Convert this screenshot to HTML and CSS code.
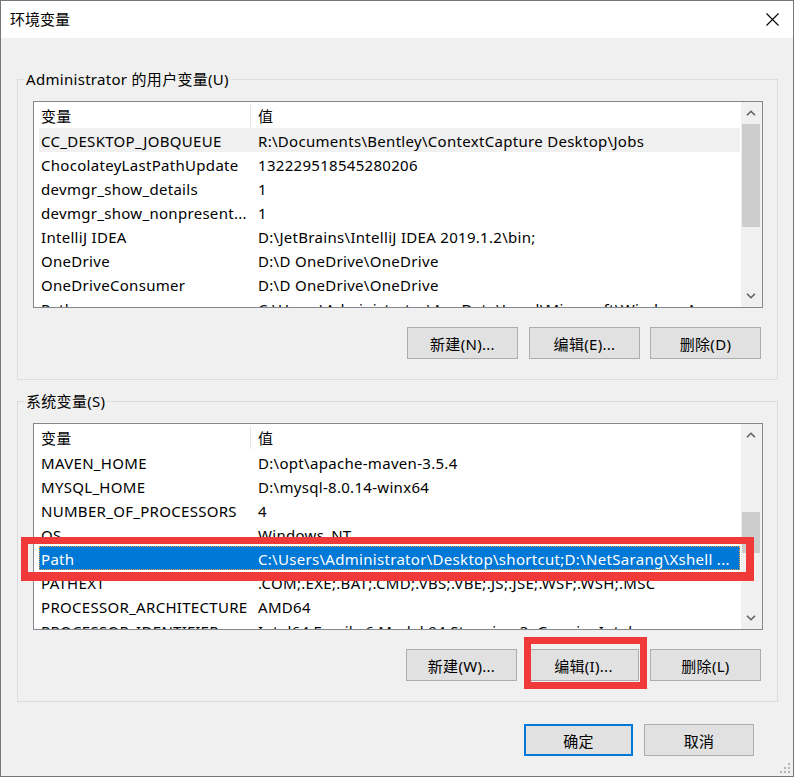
FILE: index.html
```html
<!DOCTYPE html>
<html lang="zh-CN">
<head>
    <meta charset="UTF-8">
    <title>环境变量</title>
    <link rel="stylesheet" href="styles.css">
</head>
<body>
    <div class="window">
        <div class="titlebar">
            <span class="title">环境变量</span>
            <span class="close">
                <svg width="13" height="13" viewBox="0 0 13 13"><path d="M0.5 0.5 L12.5 12.5 M12.5 0.5 L0.5 12.5" stroke="#000" stroke-width="1.1" fill="none"/></svg>
            </span>
        </div>

        <div class="client">
            <fieldset class="group">
                <legend>Administrator 的用户变量(U)</legend>
                <div class="listview">
                    <div class="list-body">
                        <div class="list-head">
                            <span class="cell name">变量</span>
                            <span class="cell value">值</span>
                        </div>
                        <div class="row hover"><span class="cell name">CC_DESKTOP_JOBQUEUE</span><span class="cell value">R:\Documents\Bentley\ContextCapture Desktop\Jobs</span></div>
                        <div class="row"><span class="cell name">ChocolateyLastPathUpdate</span><span class="cell value">132229518545280206</span></div>
                        <div class="row"><span class="cell name">devmgr_show_details</span><span class="cell value">1</span></div>
                        <div class="row"><span class="cell name">devmgr_show_nonpresent...</span><span class="cell value">1</span></div>
                        <div class="row"><span class="cell name">IntelliJ IDEA</span><span class="cell value">D:\JetBrains\IntelliJ IDEA 2019.1.2\bin;</span></div>
                        <div class="row"><span class="cell name">OneDrive</span><span class="cell value">D:\D OneDrive\OneDrive</span></div>
                        <div class="row"><span class="cell name">OneDriveConsumer</span><span class="cell value">D:\D OneDrive\OneDrive</span></div>
                        <div class="row"><span class="cell name">Path</span><span class="cell value">C:\Users\Administrator\AppData\Local\Microsoft\WindowsApps;</span></div>
                    </div>
                    <div class="scrollbar">
                        <div class="sb-btn">
                            <svg width="10" height="6" viewBox="0 0 10 6"><path d="M1 5.3 L5 1.3 L9 5.3" stroke="#606060" stroke-width="1.6" fill="none"/></svg>
                        </div>
                        <div class="sb-track">
                            <div class="sb-thumb user-thumb"></div>
                        </div>
                        <div class="sb-btn">
                            <svg width="10" height="6" viewBox="0 0 10 6"><path d="M1 0.7 L5 4.7 L9 0.7" stroke="#606060" stroke-width="1.6" fill="none"/></svg>
                        </div>
                    </div>
                </div>
                <div class="btn-row">
                    <button class="btn">新建(N)...</button>
                    <button class="btn">编辑(E)...</button>
                    <button class="btn">删除(D)</button>
                </div>
            </fieldset>

            <fieldset class="group system">
                <legend>系统变量(S)</legend>
                <div class="listview">
                    <div class="list-body">
                        <div class="list-head">
                            <span class="cell name">变量</span>
                            <span class="cell value">值</span>
                        </div>
                        <div class="row"><span class="cell name">MAVEN_HOME</span><span class="cell value">D:\opt\apache-maven-3.5.4</span></div>
                        <div class="row"><span class="cell name">MYSQL_HOME</span><span class="cell value">D:\mysql-8.0.14-winx64</span></div>
                        <div class="row"><span class="cell name">NUMBER_OF_PROCESSORS</span><span class="cell value">4</span></div>
                        <div class="row"><span class="cell name">OS</span><span class="cell value">Windows_NT</span></div>
                        <div class="row selected"><span class="cell name">Path</span><span class="cell value">C:\Users\Administrator\Desktop\shortcut;D:\NetSarang\Xshell ...</span></div>
                        <div class="row"><span class="cell name">PATHEXT</span><span class="cell value">.COM;.EXE;.BAT;.CMD;.VBS;.VBE;.JS;.JSE;.WSF;.WSH;.MSC</span></div>
                        <div class="row"><span class="cell name">PROCESSOR_ARCHITECTURE</span><span class="cell value">AMD64</span></div>
                        <div class="row"><span class="cell name">PROCESSOR_IDENTIFIER</span><span class="cell value">Intel64 Family 6 Model 94 Stepping 3, GenuineIntel</span></div>
                    </div>
                    <div class="scrollbar">
                        <div class="sb-btn">
                            <svg width="10" height="6" viewBox="0 0 10 6"><path d="M1 5.3 L5 1.3 L9 5.3" stroke="#606060" stroke-width="1.6" fill="none"/></svg>
                        </div>
                        <div class="sb-track">
                            <div class="sb-thumb system-thumb"></div>
                        </div>
                        <div class="sb-btn">
                            <svg width="10" height="6" viewBox="0 0 10 6"><path d="M1 0.7 L5 4.7 L9 0.7" stroke="#606060" stroke-width="1.6" fill="none"/></svg>
                        </div>
                    </div>
                    <div class="mark row-mark"></div>
                </div>
                <div class="btn-row">
                    <button class="btn">新建(W)...</button>
                    <span class="marked">
                        <button class="btn">编辑(I)...</button>
                        <span class="mark btn-mark"></span>
                    </span>
                    <button class="btn">删除(L)</button>
                </div>
            </fieldset>

            <div class="footer">
                <button class="btn default">确定</button>
                <button class="btn">取消</button>
            </div>
        </div>

        <svg class="grip" width="12" height="12" viewBox="0 0 12 12">
            <rect x="9" y="1" width="2" height="2" fill="#b4b4b4"/>
            <rect x="5" y="5" width="2" height="2" fill="#b4b4b4"/>
            <rect x="9" y="5" width="2" height="2" fill="#b4b4b4"/>
            <rect x="1" y="9" width="2" height="2" fill="#b4b4b4"/>
            <rect x="5" y="9" width="2" height="2" fill="#b4b4b4"/>
            <rect x="9" y="9" width="2" height="2" fill="#b4b4b4"/>
        </svg>
    </div>
</body>
</html>
```

FILE: styles.css
```css
:root {
    --face: #f0f0f0;
    --line: #dcdcdc;
    --list-border: #828790;
    --btn-face: #e1e1e1;
    --btn-border: #adadad;
    --accent: #0078d7;
    --mark: #f03a3a;
}

* {
    box-sizing: border-box;
}

body {
    margin: 0;
    font-family: "Noto Sans", "Noto Sans CJK SC", sans-serif;
    font-size: 15px;
    letter-spacing: 0.3px;
    color: #000;
    background: #fff;
}

.window {
    position: relative;
    width: 794px;
    height: 777px;
    border: 1px solid #777;
    background: var(--face);
    display: flex;
    flex-direction: column;
}

.titlebar {
    height: 37px;
    background: #fff;
    display: flex;
    align-items: center;
    justify-content: space-between;
}

.title {
    padding-left: 9px;
    line-height: 20px;
    margin-top: -1px;
    letter-spacing: 0;
}

.close {
    display: flex;
    margin-right: 14px;
    margin-top: -1px;
}

.client {
    padding: 0 15px 0 16px;
}

.group {
    margin: 31px 0 0;
    padding: 12px 14px 20px 15px;
    border: 1px solid var(--line);
    min-width: 0;
}

.group.system {
    margin-top: 11px;
}

.group legend {
    padding: 0 2px;
    margin-left: -9px;
    line-height: 20px;
}

.listview {
    position: relative;
    display: flex;
    height: 207px;
    background: #fff;
    border: 1px solid var(--list-border);
}

.list-body {
    flex: 1;
    overflow: hidden;
}

.list-head,
.row {
    display: grid;
    grid-template-columns: 212px 1fr;
    margin: 0 1px 0 5px;
    white-space: nowrap;
}

.list-head {
    height: 26px;
    padding-top: 1px;
}

.list-head .name {
    border-right: 1px solid #e5e5e5;
    margin: 1px 0;
    line-height: 25px;
}

.list-head .value {
    line-height: 27px;
}

.row {
    height: 24px;
    line-height: 25px;
    padding-top: 1px;
}

.cell {
    overflow: hidden;
}

.cell.name {
    padding-left: 2px;
}

.cell.value {
    padding-left: 7px;
}

.row.hover {
    background: #f0f0f0;
}

.row.selected {
    background: var(--accent);
    color: #fff;
    outline: 1px dotted #f0a040;
    outline-offset: -1px;
}

.scrollbar {
    width: 21px;
    background: var(--face);
    display: flex;
    flex-direction: column;
}

.sb-btn {
    height: 22px;
    display: flex;
    align-items: center;
    justify-content: center;
    padding-right: 1px;
}

.sb-track {
    flex: 1;
}

.sb-thumb {
    margin: 0 2px 0 1px;
    background: #cdcdcd;
}

.user-thumb {
    height: 103px;
}

.system-thumb {
    margin-top: 66px;
    height: 41px;
}

.btn-row {
    display: flex;
    justify-content: flex-end;
    gap: 10px;
    margin-top: 19px;
    padding-right: 2px;
}

.btn-row .btn:first-child {
    margin-right: 1px;
}

.btn {
    width: 111px;
    height: 32px;
    padding: 0;
    background: var(--btn-face);
    border: 1px solid var(--btn-border);
    border-radius: 0;
    font-family: inherit;
    font-size: 15px;
    letter-spacing: 0.3px;
    color: #000;
}

.marked {
    position: relative;
    display: flex;
}

.mark {
    position: absolute;
    border: 7px solid var(--mark);
}

.row-mark {
    left: -13px;
    top: 113px;
    width: 733px;
    height: 44px;
    border-width: 7px 8px 9px 7px;
}

.btn-mark {
    left: -4px;
    top: -12px;
    width: 123px;
    height: 52px;
}

.footer {
    display: flex;
    justify-content: flex-end;
    gap: 11px;
    margin-top: 22px;
    padding-right: 24px;
}

.footer .btn {
    width: 110px;
}

.btn.default {
    width: 109px;
    border: 2px solid var(--accent);
}

.grip {
    position: absolute;
    right: 2px;
    bottom: 2px;
}
```
